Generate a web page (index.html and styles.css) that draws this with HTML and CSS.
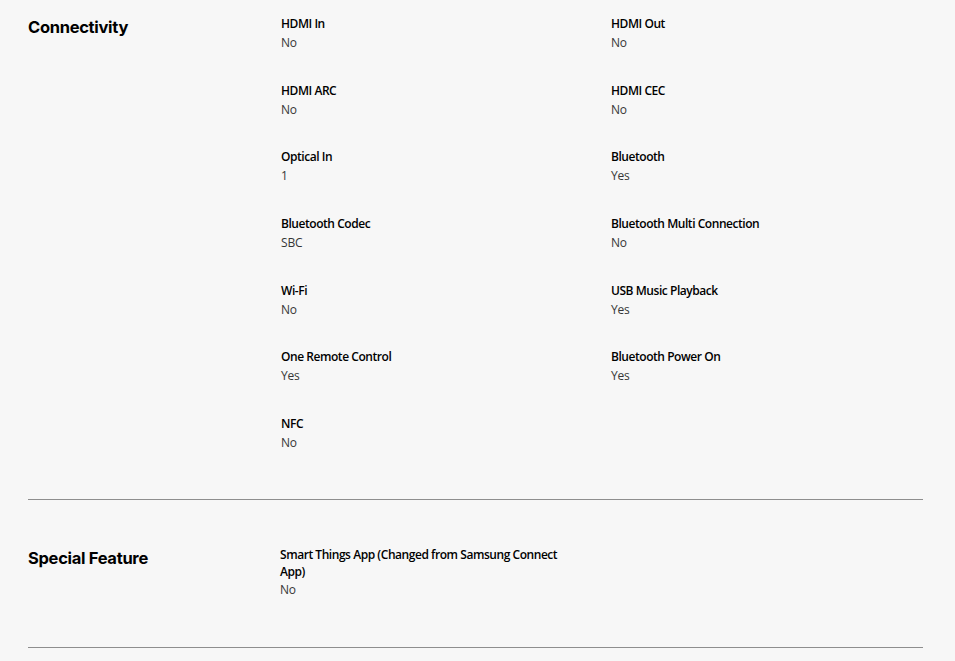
FILE: index.html
```html
<!DOCTYPE html>
<html>
<head>
<meta charset="utf-8">
<link rel="stylesheet" href="styles.css">
</head>
<body>
<div class="page">
  <section class="spec-section first">
    <h2 class="spec-heading">Connectivity</h2>
    <div class="spec-grid">
      <div class="spec-item"><div class="spec-title">HDMI In</div><div class="spec-value">No</div></div>
      <div class="spec-item"><div class="spec-title">HDMI Out</div><div class="spec-value">No</div></div>
      <div class="spec-item"><div class="spec-title">HDMI ARC</div><div class="spec-value">No</div></div>
      <div class="spec-item"><div class="spec-title">HDMI CEC</div><div class="spec-value">No</div></div>
      <div class="spec-item"><div class="spec-title">Optical In</div><div class="spec-value">1</div></div>
      <div class="spec-item"><div class="spec-title">Bluetooth</div><div class="spec-value">Yes</div></div>
      <div class="spec-item"><div class="spec-title">Bluetooth Codec</div><div class="spec-value">SBC</div></div>
      <div class="spec-item"><div class="spec-title">Bluetooth Multi Connection</div><div class="spec-value">No</div></div>
      <div class="spec-item"><div class="spec-title">Wi-Fi</div><div class="spec-value">No</div></div>
      <div class="spec-item"><div class="spec-title">USB Music Playback</div><div class="spec-value">Yes</div></div>
      <div class="spec-item"><div class="spec-title">One Remote Control</div><div class="spec-value">Yes</div></div>
      <div class="spec-item"><div class="spec-title">Bluetooth Power On</div><div class="spec-value">Yes</div></div>
      <div class="spec-item"><div class="spec-title">NFC</div><div class="spec-value">No</div></div>
    </div>
  </section>
  <section class="spec-section second">
    <h2 class="spec-heading">Special Feature</h2>
    <div class="spec-grid">
      <div class="spec-item shifted"><div class="spec-title">Smart Things App (Changed from Samsung Connect App)</div><div class="spec-value tight">No</div></div>
    </div>
  </section>
</div>
</body>
</html>
```
FILE: styles.css
```css
html, body {
  margin: 0;
  padding: 0;
  background: #f7f7f7;
}
body {
  font-family: "Open Sans", "Noto Sans", sans-serif;
  color: #000;
}
.page {
  width: 895px;
  margin-left: 28px;
}
.spec-section {
  display: grid;
  grid-template-columns: 253px 1fr;
  align-items: start;
  padding: 46px 0 49px;
  border-bottom: 1px solid #8e8e8e;
}
.spec-section.first {
  padding-top: 15px;
  padding-bottom: 48px;
}
.spec-heading {
  margin: 0;
  font-family: Inter, "Liberation Sans", sans-serif;
  font-weight: 700;
  font-size: 16.5px;
  line-height: 24px;
  letter-spacing: -0.3px;
}
.spec-grid {
  display: grid;
  grid-template-columns: 330px 300px;
  row-gap: 30.7px;
}
.spec-item.shifted {
  margin-left: -1px;
  width: 290px;
}
.spec-title {
  font-size: 12px;
  font-weight: 600;
  line-height: 17px;
  letter-spacing: -0.45px;
}
.spec-value {
  margin-top: 2px;
  font-size: 12px;
  line-height: 17px;
  color: #363636;
  letter-spacing: -0.2px;
}
.spec-value.tight {
  margin-top: 1px;
}
```
